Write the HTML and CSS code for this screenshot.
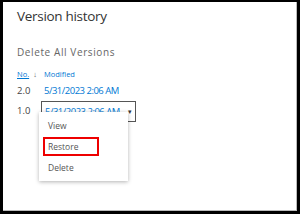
FILE: index.html
```html
<!DOCTYPE html>
<html lang="en">
<head>
    <meta charset="UTF-8">
    <title>Version history</title>
    <link rel="stylesheet" href="styles.css">
</head>
<body>
    <div class="panel">
        <h1>Version history</h1>
        <div class="delete-all">Delete All Versions</div>

        <div class="versions">
            <div class="head-row">
                <span class="col-no"><a class="sort-link">No.</a><span class="sort-arrow">&#8595;</span></span>
                <span class="col-date"><a class="sort-link plain">Modified</a></span>
            </div>
            <div class="row">
                <span class="col-no">2.0</span>
                <span class="col-date"><a class="date-link">5/31/2023 2:06 AM</a></span>
            </div>
            <div class="row">
                <span class="col-no">1.0</span>
                <span class="col-date open">
                    <span class="date-box">
                        <a class="date-link">5/31/2023 2:06 AM</a>
                        <span class="caret">&#9662;</span>
                    </span>
                    <div class="menu">
                        <div class="menu-item">View</div>
                        <div class="menu-item selected">Restore</div>
                        <div class="menu-item">Delete</div>
                    </div>
                </span>
            </div>
        </div>
    </div>
</body>
</html>
```

FILE: styles.css
```css
body {
    margin: 0;
    padding: 2px 3px 3px 3px;
    background: #000;
    font-family: "Open Sans", "Noto Sans", sans-serif;
    height: 214px;
    box-sizing: border-box;
    overflow: hidden;
}
.panel {
    background: #fff;
    height: 100%;
    box-sizing: border-box;
    border-right: 1px solid #bbb;
    border-bottom: 1px solid #bbb;
    padding: 4px 0 0 14px;
}
h1 {
    margin: 0;
    font-size: 13.5px;
    font-weight: 400;
    letter-spacing: -0.3px;
    color: #333;
    line-height: 20px;
}
.delete-all {
    margin-top: 19px;
    font-size: 10px;
    letter-spacing: 0.6px;
    color: #666;
    line-height: 14px;
}
.versions {
    margin-top: 9px;
}
.head-row, .row {
    display: grid;
    grid-template-columns: 27px 1fr;
    align-items: center;
}
.head-row {
    font-size: 7.5px;
    height: 12px;
}
.row {
    font-size: 9.5px;
    color: #444;
    height: 20px;
}
.sort-link {
    color: #0078d4;
    text-decoration: underline;
}
.sort-link.plain {
    text-decoration: none;
}
.sort-arrow {
    color: #666;
    margin-left: 4px;
}
.date-link {
    color: #0078d4;
    letter-spacing: -0.5px;
}
.col-date {
    position: relative;
}
.col-date.open {
    align-self: start;
    height: 20px;
}
.date-box {
    display: flex;
    align-items: center;
    justify-content: space-between;
    width: 95px;
    height: 21px;
    box-sizing: border-box;
    border: 1px solid #555;
    margin: 1px 0 0 -3px;
    padding: 0 3px 0 3px;
}
.caret {
    font-size: 7px;
    color: #333;
}
.menu {
    position: absolute;
    left: -5px;
    top: 12px;
    width: 89px;
    background: #fff;
    box-shadow: 0 1px 4px rgba(0, 0, 0, 0.3);
    padding: 3px 0;
}
.menu-item {
    font-size: 8.5px;
    color: #555;
    line-height: 21px;
    height: 21px;
    padding-left: 9px;
}
.menu-item.selected {
    border: 2px solid #e00;
    width: 56px;
    box-sizing: border-box;
    margin: 1px 0 1px 4px;
    padding-left: 3px;
    line-height: 15px;
    height: 19px;
}
```
